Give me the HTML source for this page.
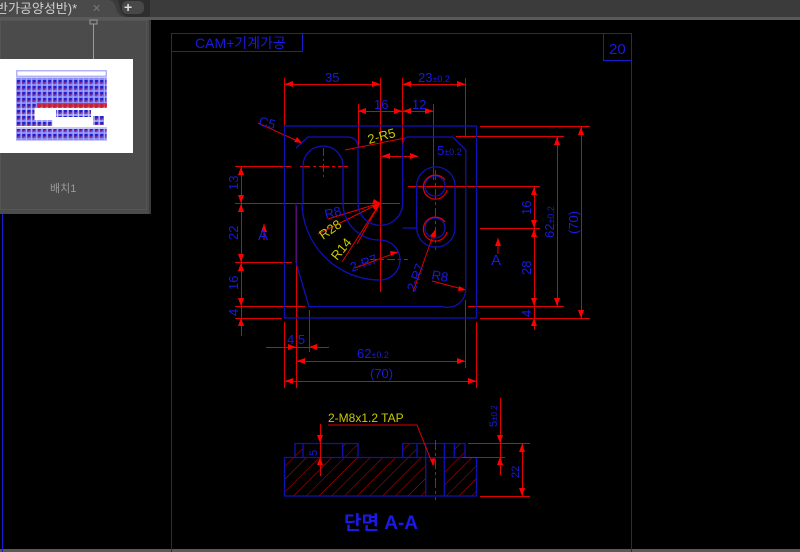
<!DOCTYPE html>
<html><head><meta charset="utf-8"><style>
html,body{margin:0;padding:0;background:#000;width:800px;height:552px;overflow:hidden}
svg{display:block}
text{font-family:"Liberation Sans","Noto Sans CJK KR",sans-serif}
</style></head><body>
<svg width="800" height="552" viewBox="0 0 800 552" xmlns="http://www.w3.org/2000/svg">
<rect width="800" height="552" fill="#000"/>
<!-- tab bar -->
<rect x="0" y="0" width="800" height="17" fill="#3b3b3b"/>
<path d="M0 0 H108 Q114 0 116 8 Q118 17 126 17 H0 Z" fill="#4a4a4a"/>
<path d="M118 0 H150 V17 H130 Q122 17 120 8 Z" fill="#2e2e2e"/>
<rect x="122" y="1" width="22" height="13" rx="5" fill="#484848"/>
<text x="-4" y="13" font-size="13" fill="#d0d0d0">반가공양성반)*</text>
<text x="92" y="12" font-size="11" fill="#777">✕</text>
<text x="124" y="12" font-size="14" font-weight="bold" fill="#ddd">+</text>
<rect x="0" y="17" width="800" height="3" fill="#5a5a5a"/>
<rect x="0" y="549" width="800" height="3" fill="#5a5a5a"/>

<!-- sheet frame -->
<g stroke="#1a1ad0" stroke-width="1" fill="none">
<path d="M171.5 552 V33.5 H631.5 V552"/>
<path d="M171.5 51.5 H302.5 V33.5"/>
<path d="M603.5 33.5 V60.5 H631.5"/>
<path d="M2.5 20 V552"/>
</g>
<text x="195" y="48" font-size="14" fill="#1a1ae0">CAM+기계가공</text>
<text x="609" y="54" font-size="15" fill="#1a1ae0">20</text>

<!-- red dimension lines -->
<g stroke="#e00000" stroke-width="1" fill="none">
<path d="M284.5 78 V126 M380.5 78 V292 M402.5 78 V148 M465.5 78 V136 M358.5 104 V148 M433.5 104 V180"/>
<path d="M284 84.5 H380 M402 84.5 H465 M358 111.5 H433 M382 156.5 H418"/>
<path d="M480 126.5 H590 M456 136.5 H564 M408 186.5 H540 M490 228.5 H540 M468 306.5 H564 M480 318.5 H590"/>
<path d="M581.5 126 V318 M557.5 137 V306 M534.5 186 V330"/>
<path d="M235 166.5 H291 M235 203.5 H400 M235 262.5 H292 M235 306.5 H305 M235 318.5 H282"/>
<path d="M241.5 166 V318 M241.5 300 V336"/>
<path d="M296.5 206 V388 M465.5 300 V368 M476.5 322 V388 M284.5 322 V388 M309.5 310 V352"/>
<path d="M296 361.5 H465 M284 381.5 H476 M266 347.5 H329"/>
<path d="M323.5 148 V178" stroke-dasharray="8 3 2 3"/>
<path d="M300 166.5 H350" stroke-dasharray="10 3 3 3"/>
<path d="M380.5 200 V290" stroke-dasharray="14 3 3 3"/>
<path d="M435.5 170 V250" stroke-dasharray="10 3 3 3"/>
<path d="M370 259.5 H408" stroke-dasharray="8 3 3 3"/>
<path d="M480 228.5 H540" stroke-dasharray="14 3 3 3"/>
<path d="M258 123 L302 143 M345 150 L405 138 M380 203 L328 219 M380 203 L318 234 M380 203 L342 262 M380 203 L357 244 M355 268 L398 252 M413 292 L435 230 M432 281 L466 290 M264 240 V224 M498 254 V238"/>
</g>
<g fill="#ff0000">
<path d="M285 84 l8 -3 v6z M380 84 l-8 -3 v6z M403 84 l8 -3 v6z M465 84 l-8 -3 v6z"/>
<path d="M358 111 l8 -3 v6z M402 111 l-8 -3 v6z M403 111 l8 -3 v6z M433 111 l-8 -3 v6z M382 156 l8 -3 v6z M418 156 l-8 -3 v6z"/>
<path d="M581 127 l-3 8 h6z M581 318 l-3 -8 h6z M557 137 l-3 8 h6z M557 306 l-3 -8 h6z"/>
<path d="M534 187 l-3 8 h6z M534 228 l-3 -8 h6z M534 229 l-3 8 h6z M534 306 l-3 -8 h6z M534 318 l-3 8 h6z"/>
<path d="M241 167 l-3 8 h6z M241 203 l-3 -8 h6z M241 204 l-3 8 h6z M241 262 l-3 -8 h6z M241 263 l-3 8 h6z M241 306 l-3 -8 h6z M241 318 l-3 8 h6z"/>
<path d="M297 361 l8 -3 v6z M465 361 l-8 -3 v6z M285 381 l8 -3 v6z M476 381 l-8 -3 v6z M296 347 l-8 -3 v6z M309 347 l8 -3 v6z"/>
<path d="M302 143 l-8 -1 l3 -5z M380 203 l-8 1 l2 -5z M380 203 l-6 6 l-2 -4z M380 203 l-3 8 l-4 -3z M398 252 l-7 4 l-1 -5z M435 230 l0 8 l-5 -2z M466 290 l-8 1 l1 -5z M264 224 l-3 8 h6z M498 238 l-3 8 h6z"/>
</g>

<!-- part outline -->
<g stroke="#1010b8" stroke-width="1.3" fill="none">
<rect x="284.5" y="126" width="192" height="192"/>
<path d="M296 148 L308 137 H347 Q358 137 358 148 V203 A22 22 0 0 0 402.7 203 V148 Q402.7 137 408 137 H453 L465.7 150 V288 A18 18 0 0 1 443 306.7 H309 L296 262 V203"/>
<path d="M303 203 V166 A20 20 0 0 1 343 166 V203"/>
<path d="M343 203 A37 37 0 0 0 380 240 A19 19 0 0 1 380 280 A78 78 0 0 1 302 203"/>
<path d="M402.7 228 H416"/>
<path d="M416.7 186 A18.3 18.3 0 0 1 455 186 V228 A19 19 0 0 1 416.7 228 Z"/>
<circle cx="435" cy="186" r="10"/>
<circle cx="435" cy="228" r="10"/>
</g>
<g stroke="#e00000" stroke-width="1.2" fill="none">
<path d="M445 180 A12 12 0 1 0 447 190"/>
<path d="M445 222 A12 12 0 1 0 447 232"/>
</g>

<g fill="#1a1ae0" font-size="13">
<text x="325" y="82">35</text>
<text x="418" y="82">23<tspan font-size="9">±0.2</tspan></text>
<text x="374" y="109">16</text>
<text x="412" y="109">12</text>
<text x="437" y="155">5<tspan font-size="9">±0.2</tspan></text>
<text x="258" y="125" transform="rotate(15 258 125)">C5</text>
<text x="326" y="219" transform="rotate(-15 326 219)">R8</text>
<text x="352" y="272" transform="rotate(-20 352 272)">2-R7</text>
<text x="415" y="292" transform="rotate(-70 415 292)">2-R7</text>
<text x="431" y="279" transform="rotate(10 431 279)">R8</text>
<text x="258" y="240" font-size="15">A</text>
<text x="491" y="265" font-size="15">A</text>
<text x="357" y="358">62<tspan font-size="9">±0.2</tspan></text>
<text x="370" y="378">(70)</text>
<text x="287" y="344">4 5</text>
<text x="238" y="190" transform="rotate(-90 238 190)">13</text>
<text x="238" y="240" transform="rotate(-90 238 240)">22</text>
<text x="238" y="290" transform="rotate(-90 238 290)">16</text>
<text x="238" y="316" transform="rotate(-90 238 316)">4</text>
<text x="531" y="215" transform="rotate(-90 531 215)">16</text>
<text x="531" y="275" transform="rotate(-90 531 275)">28</text>
<text x="531" y="317" transform="rotate(-90 531 317)">4</text>
<text x="554" y="238" transform="rotate(-90 554 238)">62<tspan font-size="9">±0.2</tspan></text>
<text x="578" y="234" transform="rotate(-90 578 234)">(70)</text>
</g>
<g fill="#c8c800" font-size="13">
<text x="369" y="144" transform="rotate(-15 369 144)">2-R5</text>
<text x="323" y="240" transform="rotate(-35 323 240)">R28</text>
<text x="337" y="261" transform="rotate(-50 337 261)">R14</text>
</g>

<!-- section view -->
<defs>
<pattern id="h" width="9" height="9" patternUnits="userSpaceOnUse" patternTransform="rotate(45)">
<line x1="0" y1="0" x2="0" y2="9" stroke="#d00000" stroke-width="1"/>
</pattern>
</defs>
<path d="M284.5 457.5 H295 V443.5 H358 V457.5 H402.7 V443.5 H465 V457.5 H476.5 V496 H284.5 Z" fill="url(#h)"/>
<rect x="425.7" y="443.5" width="18.6" height="53" fill="#000"/>
<rect x="303" y="443.5" width="40" height="14" fill="#000"/>
<rect x="417" y="443.5" width="37" height="14" fill="#000"/>
<g stroke="#1010b8" stroke-width="1.3" fill="none">
<path d="M284.5 457.5 H295 V443.5 H358 V457.5 H402.7 V443.5 H465 V457.5 H476.5 V496 H284.5 Z"/>
<path d="M303 443.5 V457.5 M342.7 443.5 V457.5 M417 443.5 V457.5 M454.3 443.5 V457.5 M425.7 443.5 V496 M444.3 443.5 V496 M295 457.5 H358 M402.7 457.5 H465"/>
</g>
<g stroke="#e00000" stroke-width="1" fill="none">
<path d="M435.5 440 V500" stroke-dasharray="10 3 3 3"/>
<path d="M320.5 424 V476 M468 443.5 H530 M480 496.5 H530 M522.5 443 V496 M500.5 398 V475 M462 457.5 H505"/>
<path d="M328 425 H417 L433 465"/>
</g>
<g fill="#ff0000">
<path d="M320 443 l-3 -8 h6z M320 457 l-3 8 h6z M522 444 l-3 8 h6z M522 496 l-3 -8 h6z M500 443 l-3 -8 h6z M500 457 l-3 8 h6z M434 466 l-4 -7 l5 -1z"/>
</g>
<text x="328" y="422" font-size="12" fill="#c8c800">2-M8x1.2 TAP</text>
<g fill="#1a1ae0" font-size="11">
<text x="317" y="456" transform="rotate(-90 317 456)">5</text>
<text x="519" y="478" transform="rotate(-90 519 478)">22</text>
<text x="497" y="427" transform="rotate(-90 497 427)">5<tspan font-size="8">±0.2</tspan></text>
</g>
<text x="344" y="529" font-size="19" font-weight="bold" fill="#1a1ae8">단면 A-A</text>

<!-- layout popup -->
<rect x="0" y="20" width="151" height="194" fill="#4b4b4b"/>
<rect x="0.5" y="20.5" width="146" height="189" fill="none" stroke="#555"/>
<rect x="149" y="20" width="2" height="194" fill="#3a3a3a"/>
<path d="M93.5 24 V59" stroke="#9a9a9a"/>
<rect x="90" y="20" width="7" height="4" fill="none" stroke="#9a9a9a"/>
<rect x="0" y="59" width="133" height="94" fill="#fff"/>
<defs>
<pattern id="g" width="5.2" height="6" patternUnits="userSpaceOnUse" x="16" y="73">
<rect x="0.3" y="0.3" width="4.6" height="5.4" fill="#7070f0"/>
<rect x="1" y="1" width="3" height="2.5" fill="#2020d0"/>
<rect x="1" y="3.5" width="2" height="1.5" fill="#e02020"/>
</pattern>
</defs>
<rect x="16" y="70" width="91" height="71" fill="#c8c8ff"/>
<rect x="17" y="71" width="89" height="5" fill="#fff" stroke="#7070f0" stroke-width="0.5"/>
<rect x="16.5" y="78" width="90" height="30" fill="url(#g)"/>
<rect x="37" y="103" width="70" height="4" fill="#e02020" opacity="0.8"/>
<rect x="16.5" y="108" width="91" height="19" fill="#fff"/>
<rect x="16.5" y="108" width="18" height="18" fill="url(#g)"/>
<rect x="16.5" y="120" width="36" height="6" fill="url(#g)"/>
<rect x="56" y="110" width="35" height="7" fill="url(#g)"/>
<rect x="93" y="116" width="11" height="9" fill="url(#g)"/>
<rect x="16.5" y="129" width="90" height="11" fill="url(#g)"/>
<text x="50" y="192" font-size="11" fill="#9a9a9a">배치1</text>
</svg>
</body></html>
